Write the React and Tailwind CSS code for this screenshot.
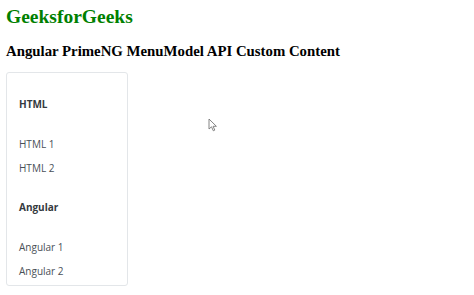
import React from "react";

const groups = [
  { label: "HTML", items: ["HTML 1", "HTML 2"] },
  { label: "Angular", items: ["Angular 1", "Angular 2"] },
];

function Cursor() {
  return (
    <svg className="absolute left-[208px] top-[118px]" width="10" height="14" viewBox="0 0 10 14">
      <path d="M1 1 L1 11 L3.5 8.8 L5.3 12.8 L6.8 12.1 L5.1 8.3 L8.4 8.3 Z" fill="#fff" stroke="#777" strokeWidth="0.9" strokeLinejoin="round" />
    </svg>
  );
}

export default function App() {
  return (
    <div className="relative min-h-[295px] bg-white px-[6px] pt-[5px]">
      <h1 className="font-['Liberation_Serif',serif] text-[19.5px] font-bold leading-[23px] text-[#008000]">GeeksforGeeks</h1>
      <h2 className="mt-[14px] font-['Liberation_Serif',serif] text-[14.8px] font-bold leading-[18px] text-black">
        Angular PrimeNG MenuModel API Custom Content
      </h2>
      <div className="mt-[12px] w-[122px] rounded-[3px] border border-[#e3e6e9] bg-white pt-[19px] pb-[2px] font-['Open_Sans',sans-serif] text-[10px]">
        {groups.map((g, i) => (
          <div key={g.label} className={i > 0 ? "mt-[15px]" : ""}>
            <div className="flex h-[24px] items-center px-[12px] font-bold text-[#343a40]">{g.label}</div>
            <div className="mt-[16px]">
              {g.items.map((it) => (
                <div key={it} className="flex h-[24px] items-center px-[12px] text-[#495057]">
                  {it}
                </div>
              ))}
            </div>
          </div>
        ))}
      </div>
      <Cursor />
    </div>
  );
}
